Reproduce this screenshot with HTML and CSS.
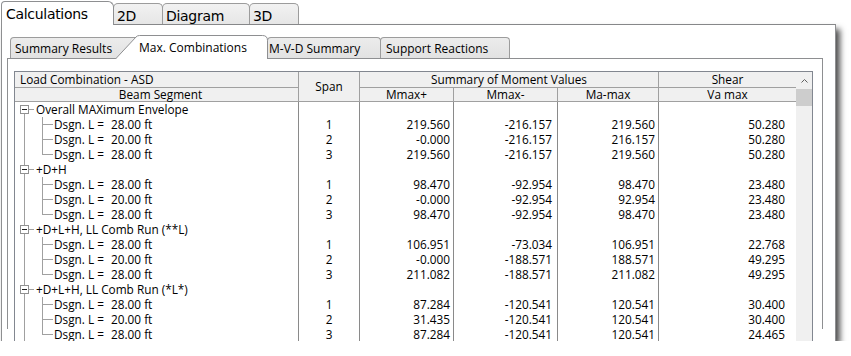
FILE: index.html
```html
<!DOCTYPE html>
<html lang="en">
<head>
  <meta charset="UTF-8" />
  <title>Calculations - Max. Combinations</title>
  <link rel="stylesheet" href="styles.css">
</head>
<body>
  <div class="window">
    <div class="tabs">
      <div class="tab active">Calculations</div>
      <div class="tab tab-2d">2D</div>
      <div class="tab tab-diagram">Diagram</div>
      <div class="tab tab-3d">3D</div>
    </div>

    <div class="panel">
      <div class="subtabs">
        <div class="subtab sub-summary">Summary Results</div>
        <div class="subtab active">
          <svg class="subtab-shape" width="153" height="24" viewBox="0 0 153 24">
            <path d="M0.5 24 L21 2 Q22.3 0.5 24.5 0.5 H147.5 Q152.5 0.5 152.5 5.5 V24" fill="#fff" stroke="#8e8f91" />
          </svg>
          <span class="subtab-label">Max. Combinations</span>
        </div>
        <div class="subtab sub-mvd">M-V-D Summary</div>
        <div class="subtab sub-support">Support Reactions</div>
      </div>

      <div class="subpanel">
        <div class="grid">
          <div class="sheet">
            <!-- header -->
            <div class="h h-load">Load Combination - ASD</div>
            <div class="h h-span">Span</div>
            <div class="h h-moment">Summary of Moment Values</div>
            <div class="h h-end">Shear</div>
            <div class="h h2 h-beam">Beam Segment</div>
            <div class="h h2">Mmax+</div>
            <div class="h h2">Mmax-</div>
            <div class="h h2">Ma-max</div>
            <div class="h h2 h-end">Va max</div>

            <!-- Overall MAXimum Envelope -->
            <div class="c group first"><span class="toggle"></span>Overall MAXimum Envelope</div>
            <div class="c"></div><div class="c"></div><div class="c"></div><div class="c"></div><div class="c end"></div>
            <div class="c leaf"><span class="lbl">Dsgn. L =</span>28.00 ft</div>
            <div class="c span">1</div><div class="c n1">219.560</div><div class="c n2">-216.157</div><div class="c n3">219.560</div><div class="c n4 end">50.280</div>
            <div class="c leaf"><span class="lbl">Dsgn. L =</span>20.00 ft</div>
            <div class="c span">2</div><div class="c n1">-0.000</div><div class="c n2">-216.157</div><div class="c n3">216.157</div><div class="c n4 end">50.280</div>
            <div class="c leaf tail"><span class="lbl">Dsgn. L =</span>28.00 ft</div>
            <div class="c span">3</div><div class="c n1">219.560</div><div class="c n2">-216.157</div><div class="c n3">219.560</div><div class="c n4 end">50.280</div>

            <!-- +D+H -->
            <div class="c group"><span class="toggle"></span>+D+H</div>
            <div class="c"></div><div class="c"></div><div class="c"></div><div class="c"></div><div class="c end"></div>
            <div class="c leaf"><span class="lbl">Dsgn. L =</span>28.00 ft</div>
            <div class="c span">1</div><div class="c n1">98.470</div><div class="c n2">-92.954</div><div class="c n3">98.470</div><div class="c n4 end">23.480</div>
            <div class="c leaf"><span class="lbl">Dsgn. L =</span>20.00 ft</div>
            <div class="c span">2</div><div class="c n1">-0.000</div><div class="c n2">-92.954</div><div class="c n3">92.954</div><div class="c n4 end">23.480</div>
            <div class="c leaf tail"><span class="lbl">Dsgn. L =</span>28.00 ft</div>
            <div class="c span">3</div><div class="c n1">98.470</div><div class="c n2">-92.954</div><div class="c n3">98.470</div><div class="c n4 end">23.480</div>

            <!-- +D+L+H, LL Comb Run (**L) -->
            <div class="c group"><span class="toggle"></span>+D+L+H, LL Comb Run (**L)</div>
            <div class="c"></div><div class="c"></div><div class="c"></div><div class="c"></div><div class="c end"></div>
            <div class="c leaf"><span class="lbl">Dsgn. L =</span>28.00 ft</div>
            <div class="c span">1</div><div class="c n1">106.951</div><div class="c n2">-73.034</div><div class="c n3">106.951</div><div class="c n4 end">22.768</div>
            <div class="c leaf"><span class="lbl">Dsgn. L =</span>20.00 ft</div>
            <div class="c span">2</div><div class="c n1">-0.000</div><div class="c n2">-188.571</div><div class="c n3">188.571</div><div class="c n4 end">49.295</div>
            <div class="c leaf tail"><span class="lbl">Dsgn. L =</span>28.00 ft</div>
            <div class="c span">3</div><div class="c n1">211.082</div><div class="c n2">-188.571</div><div class="c n3">211.082</div><div class="c n4 end">49.295</div>

            <!-- +D+L+H, LL Comb Run (*L*) -->
            <div class="c group"><span class="toggle"></span>+D+L+H, LL Comb Run (*L*)</div>
            <div class="c"></div><div class="c"></div><div class="c"></div><div class="c"></div><div class="c end"></div>
            <div class="c leaf"><span class="lbl">Dsgn. L =</span>28.00 ft</div>
            <div class="c span">1</div><div class="c n1">87.284</div><div class="c n2">-120.541</div><div class="c n3">120.541</div><div class="c n4 end">30.400</div>
            <div class="c leaf"><span class="lbl">Dsgn. L =</span>20.00 ft</div>
            <div class="c span">2</div><div class="c n1">31.435</div><div class="c n2">-120.541</div><div class="c n3">120.541</div><div class="c n4 end">30.400</div>
            <div class="c leaf tail"><span class="lbl">Dsgn. L =</span>28.00 ft</div>
            <div class="c span">3</div><div class="c n1">87.284</div><div class="c n2">-120.541</div><div class="c n3">120.541</div><div class="c n4 end">24.465</div>
          </div>

          <div class="scrollbar">
            <div class="sb-up">
              <svg width="7" height="4" viewBox="0 0 7 4"><path d="M0.5 3.5 L3.5 0.5 L6.5 3.5" fill="none" stroke="#606060" /></svg>
            </div>
            <div class="sb-thumb"></div>
          </div>
        </div>
      </div>
    </div>
  </div>
</body>
</html>
```

FILE: styles.css
```css
* {
  box-sizing: border-box;
}

body {
  margin: 0;
  background: #fff;
  font-family: "Open Sans", "Noto Sans", sans-serif;
  color: #000;
}

.window {
  width: 835px;
  margin-left: 1px;
}

/* top tabs */
.tabs {
  display: flex;
  align-items: flex-end;
  height: 25px;
  border-bottom: 1px solid #8e8f91;
  font-family: "DejaVu Sans", sans-serif;
  font-size: 14px;
  letter-spacing: -0.3px;
}

.tab {
  height: 21px;
  margin-left: -1px;
  padding: 2px 0 0 3px;
  line-height: 20px;
  white-space: nowrap;
  border: 1px solid #9c9c9c;
  border-bottom: none;
  border-radius: 5px 5px 0 0;
  background: linear-gradient(#f2f2f2, #e6e6e6);
}

.tab.active {
  width: 113px;
  height: 24px;
  margin: 0 0 -1px 0;
  padding: 1px 0 0 4px;
  line-height: 23px;
  background: #fff;
  border-color: #8e8f91;
  border-radius: 4px 6px 0 0;
  position: relative;
  z-index: 1;
}

.tab-2d { width: 50px; }
.tab-diagram { width: 88px; }
.tab-3d { width: 50px; }

/* outer panel */
.panel {
  height: 316px;
  padding: 10px 12px 0 5px;
  border-left: 1px solid #8e8f91;
  border-right: 1px solid #8e8f91;
  box-shadow: 4px 4px 6px rgba(0, 0, 0, 0.7);
  overflow: hidden;
}

/* sub tabs */
.subtabs {
  display: flex;
  align-items: flex-end;
  height: 24px;
  padding-left: 3px;
  border-bottom: 1px solid #8e8f91;
  font-size: 12px;
}

.subtab {
  height: 21px;
  padding: 2px 0 0 4px;
  line-height: 18px;
  white-space: nowrap;
  border: 1px solid #9c9c9c;
  border-bottom: none;
  border-radius: 4px 4px 0 0;
  background: linear-gradient(#ececec, #e2e2e2);
}

.sub-summary { width: 130px; }

.subtab.active {
  width: 153px;
  height: 24px;
  margin: 0 0 -1px -25px;
  padding: 1px 0 0 24px;
  line-height: 23px;
  border: none;
  background: none;
  position: relative;
  z-index: 1;
}

.subtab-shape {
  position: absolute;
  left: 0;
  top: 0;
}

.subtab-label {
  position: relative;
}

.sub-mvd {
  width: 114px;
  margin-left: -1px;
  padding-left: 1px;
}

.sub-support {
  width: 130px;
  margin-left: -1px;
  padding-left: 5px;
}

.subpanel {
  height: 270px;
  padding: 12px 9px 0 6px;
  border-left: 1px solid #8e8f91;
  border-right: 1px solid #8e8f91;
}

/* grid */
.grid {
  display: flex;
  height: 280px;
  border: 1px solid #828790;
}

.sheet {
  width: 781px;
  display: grid;
  grid-template-columns: 284px 61px 94px 104px 101px 137px;
  grid-template-rows: 16px 14px;
  grid-auto-rows: 15px;
  align-content: start;
  font-size: 11.8px;
  background: #fff;
}

.h {
  background: #f0f0f0;
  border-right: 1px solid #a0a0a0;
  border-bottom: 1px solid #a0a0a0;
  text-align: center;
  line-height: 15px;
  white-space: nowrap;
}

.h2 {
  line-height: 13px;
}

.h-load {
  text-align: left;
  padding-left: 5px;
}

.h-beam {
  padding-left: 8px;
}

.h-span {
  grid-row: span 2;
  display: flex;
  align-items: center;
  justify-content: center;
}

.h-moment {
  grid-column: span 3;
}

.h-end {
  border-right: none;
}

.c {
  border-right: 1px solid #8a8a8a;
  line-height: 15px;
  white-space: nowrap;
  overflow: hidden;
}

.c.end {
  border-right: none;
}

.span { text-align: center; }
.n1 { text-align: right; padding-right: 3px; }
.n2 { text-align: right; padding-right: 5px; }
.n3 { text-align: right; padding-right: 3px; }
.n4 { text-align: right; padding-right: 11px; }

/* tree lines */
.group {
  display: flex;
  align-items: center;
  padding-left: 5px;
  background:
    linear-gradient(#a0a0a0, #a0a0a0) 9px 0 / 1px 3px no-repeat,
    linear-gradient(#a0a0a0, #a0a0a0) 9px 12px / 1px 3px no-repeat,
    linear-gradient(#a0a0a0, #a0a0a0) 14px 7px / 5px 1px no-repeat;
}

.group.first {
  background:
    linear-gradient(#a0a0a0, #a0a0a0) 9px 12px / 1px 3px no-repeat,
    linear-gradient(#a0a0a0, #a0a0a0) 14px 7px / 5px 1px no-repeat;
}

.toggle {
  flex: none;
  width: 9px;
  height: 9px;
  margin-right: 7px;
  border: 1px solid #919191;
  background: linear-gradient(#222, #222) center / 5px 1px no-repeat, #fff;
}

.leaf {
  padding-left: 39px;
  background:
    linear-gradient(#a0a0a0, #a0a0a0) 9px 0 / 1px 100% no-repeat,
    linear-gradient(#a0a0a0, #a0a0a0) 27px 0 / 1px 100% no-repeat,
    linear-gradient(#a0a0a0, #a0a0a0) 27px 7px / 11px 1px no-repeat;
}

.leaf.tail {
  background:
    linear-gradient(#a0a0a0, #a0a0a0) 9px 0 / 1px 100% no-repeat,
    linear-gradient(#a0a0a0, #a0a0a0) 27px 0 / 1px 8px no-repeat,
    linear-gradient(#a0a0a0, #a0a0a0) 27px 7px / 11px 1px no-repeat;
}

.lbl {
  display: inline-block;
  width: 57px;
}

/* scrollbar */
.scrollbar {
  width: 16px;
  background: #f0f0f0;
}

.sb-up {
  height: 17px;
  display: flex;
  justify-content: center;
  padding-top: 7px;
}

.sb-thumb {
  height: 17px;
  background: #cdcdcd;
}
```
